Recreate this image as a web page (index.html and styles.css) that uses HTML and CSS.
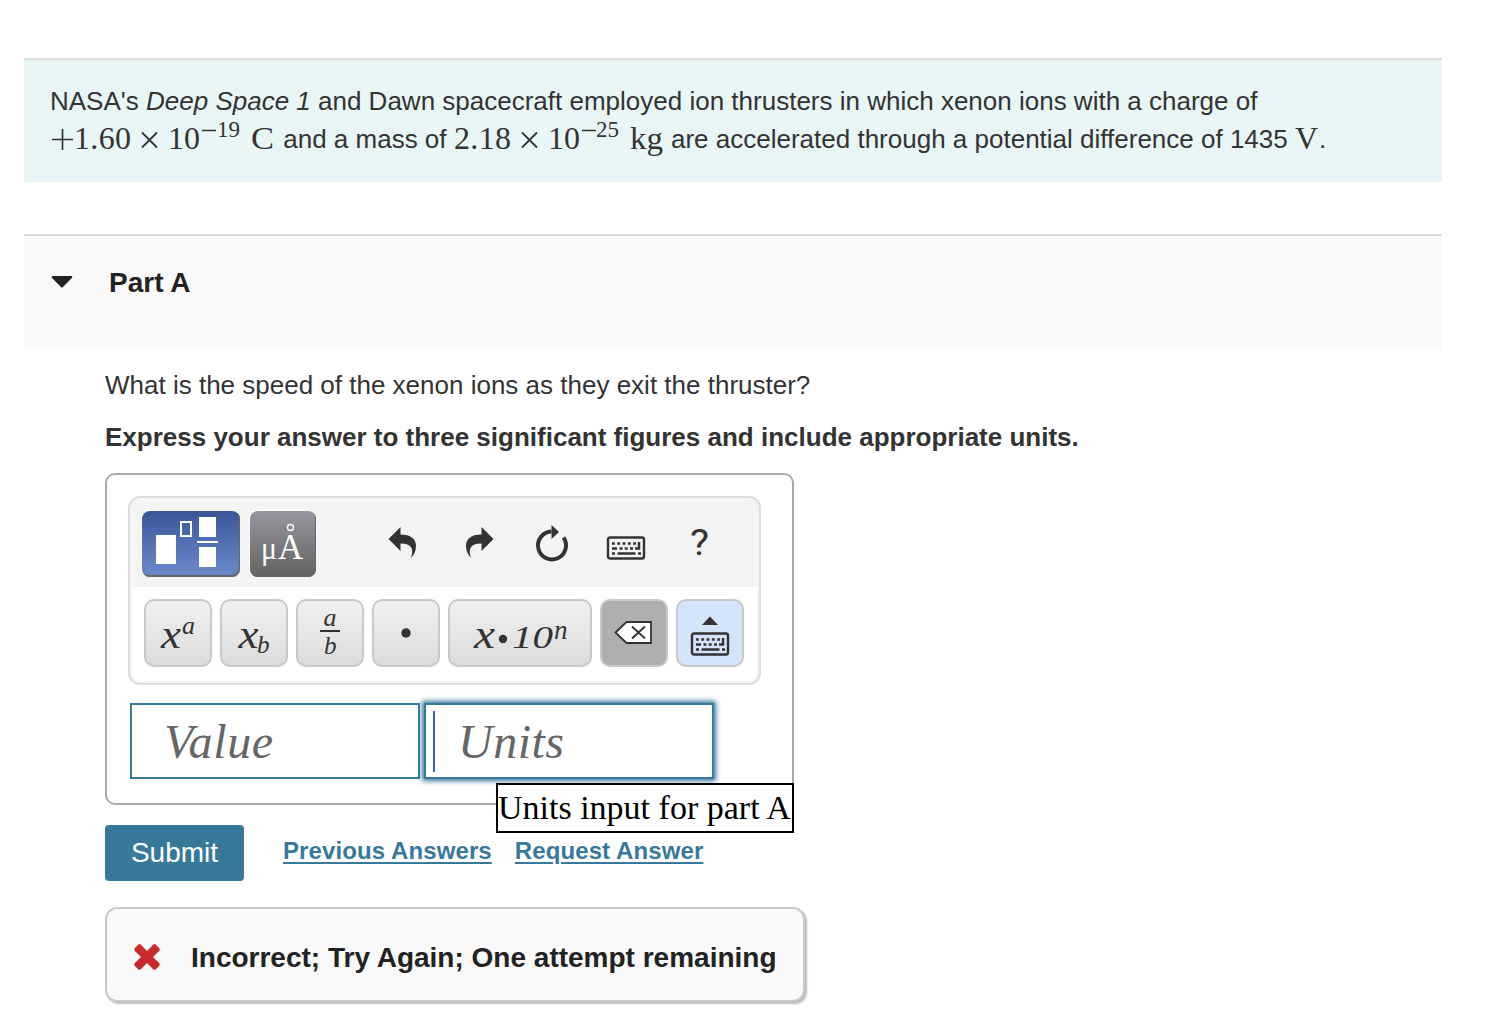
FILE: index.html
```
<!DOCTYPE html>
<html lang="en">
<head>
    <meta charset="UTF-8">
    <meta name="viewport" content="width=device-width, initial-scale=1.0">
    <title>Part A</title>
    <link rel="stylesheet" href="styles.css">
</head>
<body>
    <div class="intro">
        <p>NASA's <i>Deep Space 1</i> and Dawn spacecraft employed ion thrusters in which xenon ions with a charge of</p>
        <p>
            <svg class="math" width="226" height="42" viewBox="0 -6 226 42">
                <path d="M2 19.500H23M12.500 9V30" stroke="#333" stroke-width="1.700"/>
                <text x="24" y="28.500" textLength="57">1.60</text>
                <path d="M92 12.500l15 15M107 12.500l-15 15" stroke="#333" stroke-width="1.800"/>
                <text x="118" y="28.500" textLength="32">10</text>
                <path d="M152 10.500h14" stroke="#333" stroke-width="1.500"/>
                <text class="exp" x="167" y="16.500" textLength="23">19</text>
                <text x="201" y="28.500" textLength="23" lengthAdjust="spacingAndGlyphs">C</text>
            </svg>
            and a mass of
            <svg class="math" width="210" height="42" viewBox="0 -6 210 42">
                <text x="0" y="28.500" textLength="57">2.18</text>
                <path d="M68 12.500l15 15M83 12.500l-15 15" stroke="#333" stroke-width="1.800"/>
                <text x="94" y="28.500" textLength="32">10</text>
                <path d="M128 10.500h14" stroke="#333" stroke-width="1.500"/>
                <text class="exp" x="142" y="16.500" textLength="23">25</text>
                <text x="176" y="28.500" textLength="33" lengthAdjust="spacingAndGlyphs">kg</text>
            </svg>
            are accelerated through a potential difference of 1435
            <svg class="math" width="24" height="42" viewBox="0 -6 24 42">
                <text x="0" y="28.500" textLength="23">V</text>
            </svg>.
        </p>
    </div>

    <div class="part-head">
        <svg class="caret" width="22" height="12" viewBox="0 0 22 12"><path d="M1.500 0h19q1.500.5.500 1.700L12 11q-1 1-2 0L.8 1.700Q.2.500 1.500 0z" fill="#222"/></svg>
        <h2>Part A</h2>
    </div>

    <div class="content">
        <p class="question">What is the speed of the xenon ions as they exit the thruster?</p>
        <p class="instructions">Express your answer to three significant figures and include appropriate units.</p>

        <div class="answer">
            <div class="toolbar">
                <div class="tools">
                    <button class="tab tab-blue">
                        <svg width="98" height="66" viewBox="0 0 98 66" fill="#fff">
                            <path d="M14 24h20v29H14zM57 6h17v20H57zM55 30h21v2H55zM57 36h17v20H57z"/>
                            <path d="M39 11h10v14H39z" fill="none" stroke="#fff" stroke-width="2"/>
                        </svg>
                    </button>
                    <button class="tab tab-grey">
                        <svg width="66" height="66" viewBox="0 0 66 66" fill="#fff">
                            <text x="11" y="47.500" font-size="32" textLength="16" lengthAdjust="spacingAndGlyphs">μ</text>
                            <text x="28" y="47.500" font-size="36" textLength="25" lengthAdjust="spacingAndGlyphs">A</text>
                            <circle cx="40.500" cy="16.500" r="3" fill="none" stroke="#fff" stroke-width="1.300"/>
                        </svg>
                    </button>
                    <svg class="actions" width="340" height="66" viewBox="0 0 340 66" fill="#333">
                        <path d="M12.500 28L24.500 16v7.500C35 23.500 40 28 40 35c0 5-2 9-5 12 3-9 1-14.500-10.500-14.500V40z"/>
                        <path d="M117.500 28l-12-12v7.500C95 23.500 90 28 90 35c0 5 2 9 5 12-3-9-1-14.500 10.500-14.500V40z"/>
                        <path d="M187.500 26.500A14 14 0 1 1 175.500 20.500" fill="none" stroke="#333" stroke-width="4"/>
                        <path d="M175.500 14l7.500 7-7.500 7z"/>
                        <g id="kb" transform="translate(231 25.500)">
                            <rect x="1" y="1" width="36" height="21" rx="2" fill="none" stroke="#333" stroke-width="2.400"/>
                            <path d="M5 7h24" fill="none" stroke="#333" stroke-width="2.600" stroke-dasharray="2.800 2.500"/>
                            <path d="M5 12h5M12.500 12h3M17.700 12h3M23 12h3M28 12h5M32 5.500V13M5 17h3M10.500 17h18M31 17h3" fill="none" stroke="#333" stroke-width="2.500"/>
                        </g>
                        <text x="314" y="44" font-size="36" class="help" textLength="19" lengthAdjust="spacingAndGlyphs">?</text>
                    </svg>
                </div>
                <div class="palette">
                    <button class="key"><svg width="64" height="64" viewBox="0 0 64 64">
                        <text x="15" y="46.500" font-size="42" textLength="20" lengthAdjust="spacingAndGlyphs">x</text><text x="36" y="32.500" font-size="26">a</text></svg></button>
                    <button class="key"><svg width="64" height="64" viewBox="0 0 64 64">
                        <text x="16.500" y="46.500" font-size="42" textLength="20" lengthAdjust="spacingAndGlyphs">x</text><text x="35" y="51.500" font-size="25">b</text></svg></button>
                    <button class="key"><svg width="64" height="64" viewBox="0 0 64 64">
                        <text x="25.500" y="25" font-size="26">a</text><path d="M22 30h20" stroke="#333" stroke-width="2"/><text x="26" y="53" font-size="25">b</text></svg></button>
                    <button class="key"><svg width="64" height="64" viewBox="0 0 64 64">
                        <circle cx="32" cy="32" r="4.700"/></svg></button>
                    <button class="key key-wide"><svg width="140" height="64" viewBox="0 0 140 64">
                        <text x="24" y="47" font-size="42" textLength="21" lengthAdjust="spacingAndGlyphs">x</text><circle cx="53" cy="38" r="4.200"/>
                        <text x="62" y="47" font-size="32" textLength="41" lengthAdjust="spacingAndGlyphs">10</text><text x="104" y="38" font-size="27">n</text></svg></button>
                    <button class="key key-delete"><svg width="64" height="64" viewBox="0 0 64 64">
                        <path d="M13.500 31.500l11-10.500H49v21H24.500z" fill="#fff" stroke="#333" stroke-width="1.800"/>
                        <path d="M30 25.500l13 12M43 25.500l-13 12" stroke="#333" stroke-width="1.800"/></svg></button>
                    <button class="key key-board"><svg width="64" height="64" viewBox="0 0 64 64">
                        <path d="M24 24l8-8.500 8 8.500z"/><use href="#kb" transform="translate(-218 6)"/></svg></button>
                </div>
            </div>
            <div class="fields">
                <div class="field value"><span>Value</span></div>
                <div class="field focused"><span>Units</span></div>
            </div>
            <div class="tooltip">Units input for part A</div>
        </div>

        <div class="controls">
            <button class="submit">Submit</button>
            <a href="#">Previous Answers</a>
            <a href="#">Request Answer</a>
        </div>

        <div class="feedback">
            <svg width="28" height="28" viewBox="0 0 28 28"><path d="M5 5l18 18M23 5L5 23" stroke="#cb2a2d" stroke-width="8.500"/><path d="M3.500 6.500l3-3M21.500 3.500l3 3M24.500 21.500l-3 3M6.500 24.500l-3-3" stroke="#cb2a2d" stroke-width="4.500" stroke-linecap="round"/></svg>
            <span>Incorrect; Try Again; One attempt remaining</span>
        </div>
    </div>
</body>
</html>
```
FILE: styles.css
```
* {
    box-sizing: border-box;
}

body {
    margin: 0;
    padding: 58px 52px 0 24px;
    height: 1034px;
    overflow: hidden;
    background: #fff;
    color: #333;
    font-family: "Liberation Sans", Arial, sans-serif;
    font-size: 26px;
}

p, h2 {
    margin: 0;
}

svg {
    display: block;
    flex: none;
}

button {
    margin: 0;
    padding: 0;
    font-family: inherit;
}

.intro {
    height: 124px;
    padding: 22px 26px 0;
    background: #e8f6f5;
    border-top: 2px solid #ddd;
}

.intro p {
    height: 38px;
    line-height: 38px;
    white-space: nowrap;
}

.math {
    display: inline-block;
    margin-top: -6px;
    vertical-align: -8px;
    overflow: visible;
    font-family: "Liberation Serif", serif;
    font-size: 32px;
    fill: #333;
}

.math .exp {
    font-size: 23px;
}

.part-head {
    display: flex;
    align-items: flex-start;
    gap: 36px;
    height: 115px;
    margin-top: 52px;
    padding: 29px 27px 0;
    background: #f9f9f9;
    border-top: 2px solid #ddd;
}

.caret {
    margin-top: 11px;
}

.part-head h2 {
    font-size: 28px;
    line-height: 36px;
    color: #222;
}

.content {
    padding: 18px 0 0 81px;
}

.question, .instructions {
    line-height: 36px;
    white-space: nowrap;
}

.instructions {
    margin-top: 16px;
    font-weight: bold;
}

/* Answer editor */
.answer {
    position: relative;
    width: 689px;
    height: 332px;
    margin-top: 18px;
    padding: 21px 21px 0;
    border: 2px solid #aaa;
    border-radius: 10px;
}

.toolbar {
    width: 633px;
    height: 189px;
    padding: 0 2px;
    background: #f4f4f4;
    border: 2px solid #ddd;
    border-radius: 12px;
}

.tools {
    display: flex;
    gap: 10px;
    height: 89px;
    padding: 13px 10px 0;
}

.tab {
    height: 66px;
    border: 0;
    border-radius: 8px;
    overflow: hidden;
    box-shadow: inset -1px -2px 1px #666, -1px -1px 1px #fff;
}

.tab text {
    font-family: "Liberation Serif", serif;
}

.tab-blue {
    width: 98px;
    background: linear-gradient(#3a5698, #6c8bcd);
}

.tab-grey {
    width: 66px;
    background: linear-gradient(#98969f, #626262);
}

.actions {
    margin-left: 50px;
}

.help {
    font-family: Roboto, sans-serif;
}

.palette {
    display: flex;
    gap: 8px;
    height: 94px;
    padding: 12px 12px 0;
    background: #fff;
    border-radius: 0 0 8px 8px;
}

.key {
    width: 68px;
    height: 68px;
    flex: none;
    border: 2px solid #c8c8c8;
    border-radius: 10px;
    background: linear-gradient(#f0f0f0, #dcdcdc);
}

.key svg {
    margin-top: -1px;
    font-family: "Liberation Serif", serif;
    font-style: italic;
    fill: #333;
}

.key-wide {
    width: 144px;
}

.key-delete {
    background: #afafaf;
}

.key-board {
    background: #d3e4fc;
}

.fields {
    display: flex;
    gap: 4px;
    margin: 18px 0 0 2px;
}

.field {
    width: 290px;
    height: 76px;
    padding: 6px 7px;
    border: 2px solid #37799a;
    font: italic 48px/61px "Liberation Serif", serif;
    color: #666;
}

.field span {
    display: block;
    padding-left: 25px;
}

.value {
    letter-spacing: 0.6px;
}

.focused {
    letter-spacing: 0.5px;
    box-shadow: 0 0 5px 2px #37799a;
}

.focused span {
    padding-left: 23px;
    border-left: 2px solid #415ed0;
}

.tooltip {
    position: absolute;
    right: -2px;
    top: 308px;
    width: 298px;
    height: 50px;
    border: 2px solid #000;
    background: #fff;
    color: #000;
    font: 34px/46px "Liberation Serif", serif;
    white-space: nowrap;
}

.controls {
    display: flex;
    height: 56px;
    margin-top: 20px;
}

.submit {
    width: 139px;
    height: 56px;
    margin-right: 39px;
    border: 0;
    border-radius: 4px;
    background: #37799a;
    color: #fff;
    font-size: 28px;
}

.controls a {
    margin-right: 23px;
    color: #37799a;
    font-size: 24px;
    font-weight: bold;
    line-height: 51px;
    letter-spacing: 0.1px;
    text-decoration-thickness: 2px;
    text-underline-offset: 3px;
    white-space: nowrap;
}

.feedback {
    display: flex;
    align-items: center;
    gap: 30px;
    width: 700px;
    height: 95px;
    margin-top: 26px;
    padding: 4px 0 0 26px;
    border: 2px solid #c8c8c8;
    border-radius: 12px;
    background: #f9f9f9;
    box-shadow: 2px 2px 2px #bbb;
    color: #222;
    font-size: 28px;
    font-weight: bold;
    white-space: nowrap;
}

.feedback span {
    padding-top: 2px;
}
```
